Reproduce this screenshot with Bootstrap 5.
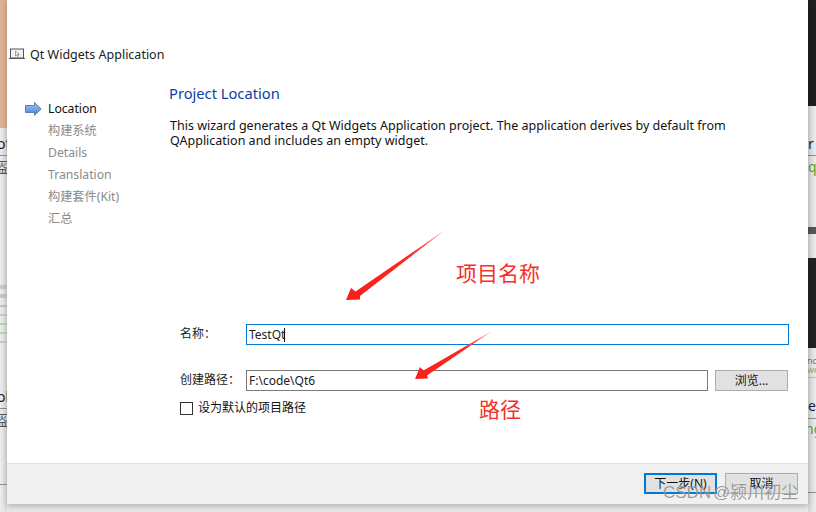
<!DOCTYPE html>
<html lang="zh">
<head>
<meta charset="utf-8">
<title>Qt Widgets Application</title>
<link href="https://cdn.jsdelivr.net/npm/bootstrap@5.3.0/dist/css/bootstrap.min.css" rel="stylesheet">
<style>
html,body{margin:0;height:512px;width:816px;overflow:hidden;background:#e9e9e9}
body{font-family:"Noto Sans","Noto Sans CJK SC",sans-serif;font-size:12px;color:#111;line-height:1.2}
.stage{height:512px;width:816px;position:relative}
.strip-l{width:7px;flex:none;overflow:hidden;background:linear-gradient(90deg,#eeeeee,#dcdcdc)}
.strip-r{width:8px;flex:none;overflow:hidden;background:linear-gradient(90deg,#d8d8d8,#ececec)}
.frag{overflow:hidden;white-space:nowrap;flex:none}
.tan{height:128px;background:#dcb093}
.dark{background:#1f1f1f}
.rule{height:1px;background:#8f8f8f;flex:none}
.fragtxt{font-size:14px;line-height:16px;color:#1a1a3c}
.dlg{width:801px;height:504px;flex:none;background:#fff;box-shadow:0 2px 6px rgba(0,0,0,.25);position:relative}
.titlebar{height:65px;padding-top:47px;padding-left:2px;font-size:12.5px;color:#222}
.titlebar svg{margin:1px 5px 0 0}
.side{width:162px;flex:none;padding-top:33px}
.step{height:22px;line-height:22px;padding-left:41px;color:#8a8a8a;font-size:12.2px;position:relative}
.step.on{color:#111}
.step svg{position:absolute;left:18px;top:4px}
.content{flex:1 1 auto;min-width:0}
.heading{font-size:14.7px;line-height:20px;color:#0a3fa6;margin-top:18px;margin-bottom:15px}
.intro{margin:0 0 0 1px;line-height:15px;font-size:12.5px;width:600px}
.fld{height:21px;border:1px solid #7a7a7a;background:#fff;padding:0 2px;line-height:19px;font-size:12px;color:#222;border-radius:0}
.fld.act{border-color:#0078d7;width:543px;flex:none}
.caret-bar{display:inline-block;width:1px;height:14px;background:#111;vertical-align:-3px;margin-left:-1px}
.lbl{width:77px;padding-left:11px;flex:none;color:#222;white-space:nowrap}
.row-a{margin-top:176px;height:21px}
.row-b{margin-top:25px;height:21px}
.browse{width:73px;height:21px;border:1px solid #adadad;background:#e1e1e1;margin-left:7px;line-height:19px;padding:0;font-size:12px;color:#111;border-radius:0}
.chk{margin:10px 0 0 11px;height:14px}
.box{width:13px;height:13px;border:1px solid #333;background:#fff;flex:none;margin-right:5px}
.foot{height:41px;background:#f0f0f0;border-top:1px solid #dfdfdf;position:absolute;left:0;right:0;bottom:0;padding:9px 10px 0 0}
.fbtn{width:73px;height:21px;border:1px solid #adadad;background:#e1e1e1;padding:0;line-height:19px;font-size:12px;color:#111;border-radius:0;margin-left:8px}
.fbtn.def{border:2px solid #0078d7;line-height:17px}
.notes{position:absolute;left:0;top:0;pointer-events:none}
.red{position:absolute;color:#f5302a;font-size:21px;line-height:26px;white-space:nowrap}
.n1{left:456px;top:260px}
.n2{left:479px;top:396px}
.mark-w{position:absolute;left:663px;top:482px;font-size:17px;line-height:22px;color:rgba(90,90,90,.6);white-space:nowrap;word-spacing:-3px;font-family:"Liberation Sans","Noto Sans CJK SC",sans-serif;text-shadow:0 0 1px rgba(255,255,255,.7)}
</style>
</head>
<body>
<div class="stage d-flex">
  <div class="strip-l d-flex flex-column">
    <div class="frag tan"></div>
    <div class="frag" style="height:8px"></div>
    <div class="frag fragtxt" style="height:16px;margin-left:-3px">ot</div>
    <div class="rule" style="margin-top:3px"></div>
    <div class="frag fragtxt" style="height:18px;margin-left:-6px;margin-top:3px;color:#555">盔</div>
    <div class="frag" style="height:108px"></div>
    <div class="rule" style="height:4px;background:#c8c8c8"></div>
    <div class="frag" style="height:5px"></div>
    <div class="rule" style="height:4px;background:#c8c8c8"></div>
    <div class="frag" style="height:7px"></div>
    <div class="rule" style="height:2px;background:#c4c4c4"></div>
    <div class="frag" style="height:7px"></div>
    <div class="rule" style="height:2px;background:#b4d6b4"></div>
    <div class="frag" style="height:7px"></div>
    <div class="rule" style="height:2px;background:#b4d6b4"></div>
    <div class="frag" style="height:7px"></div>
    <div class="rule" style="height:2px;background:#b4d6b4"></div>
    <div class="frag" style="height:7px"></div>
    <div class="rule" style="height:2px;background:#b4d6b4"></div>
    <div class="frag" style="height:46px"></div>
    <div class="frag fragtxt" style="height:16px;margin-left:-3px">ol</div>
    <div class="rule" style="margin-top:3px"></div>
    <div class="frag fragtxt" style="height:18px;margin-left:-6px;margin-top:3px;color:#555">盔</div>
    <div class="frag" style="height:54px"></div>
    <div class="rule"></div>
  </div>

  <div class="dlg d-flex flex-column">
    <div class="titlebar d-flex align-items-start">
      <svg width="16" height="12" viewBox="0 0 16 12"><rect x="1.5" y="1" width="13" height="9" fill="#f4f4f4" stroke="#555"/><path d="M0 10.5H16" stroke="#555"/><path d="M6.5 3v5l1.3-1.2 1 1.8.8-.4-1-1.8h1.8z" fill="#fff" stroke="#666" stroke-width=".6"/></svg>
      <span>Qt Widgets Application</span>
    </div>
    <div class="d-flex flex-grow-1">
      <div class="side">
        <div class="step on">
          <svg width="17" height="14" viewBox="0 0 17 14"><defs><linearGradient id="ar" x1="0" y1="0" x2="0" y2="1"><stop offset="0" stop-color="#a9c8f2"/><stop offset="1" stop-color="#3d7fd6"/></linearGradient></defs><path d="M.5 3.5H9.5V.7L16.2 7 9.5 13.3V10.5H.5z" fill="url(#ar)" stroke="#5e7fa8"/></svg>
          Location</div>
        <div class="step">构建系统</div>
        <div class="step">Details</div>
        <div class="step">Translation</div>
        <div class="step">构建套件(Kit)</div>
        <div class="step">汇总</div>
      </div>
      <div class="content">
        <div class="heading">Project Location</div>
        <p class="intro">This wizard generates a Qt Widgets Application project. The application derives by default from QApplication and includes an empty widget.</p>
        <div class="d-flex align-items-center row-a">
          <div class="lbl">名称：</div>
          <div class="fld act">TestQt<span class="caret-bar"></span></div>
        </div>
        <div class="d-flex align-items-center row-b">
          <div class="lbl">创建路径：</div>
          <div class="fld" style="width:462px">F:\code\Qt6</div>
          <button type="button" class="btn browse">浏览...</button>
        </div>
        <div class="d-flex align-items-center chk">
          <span class="box"></span><span>设为默认的项目路径</span>
        </div>
      </div>
    </div>
    <div class="foot d-flex justify-content-end">
      <button type="button" class="btn fbtn def">下一步(N)</button>
      <button type="button" class="btn fbtn">取消</button>
    </div>
  </div>

  <div class="strip-r d-flex flex-column">
    <div class="frag dark" style="height:106px"></div>
    <div class="frag" style="height:30px"></div>
    <div class="frag fragtxt" style="height:16px">r</div>
    <div class="rule" style="margin-top:3px"></div>
    <div class="frag fragtxt" style="height:18px;margin-top:3px;color:#5a9e2e">q</div>
    <div class="frag" style="height:50px"></div>
    <div class="frag" style="height:7px;background:#555"></div>
    <div class="frag" style="height:24px"></div>
    <div class="frag dark" style="height:90px;background:#222"></div>
    <div class="frag" style="height:8px"></div>
    <div class="frag" style="height:10px;font-size:9px;line-height:10px;color:#777;margin-left:-1px">nd</div>
    <div class="frag" style="height:8px;font-size:9px;line-height:8px;color:#8bb06a;margin-left:-1px">we</div>
    <div class="rule" style="background:#bbb;margin-top:3px"></div>
    <div class="frag fragtxt" style="height:16px;margin-top:20px">e</div>
    <div class="rule" style="margin-top:4px"></div>
    <div class="frag fragtxt" style="height:18px;margin-top:2px;color:#5a9e2e;margin-left:-3px">ng</div>
    <div class="frag" style="height:53px"></div>
    <div class="rule"></div>
  </div>

  <svg class="notes" width="816" height="512" viewBox="0 0 816 512">
    <defs>
      <linearGradient id="a1" gradientUnits="userSpaceOnUse" x1="346" y1="300" x2="445" y2="230"><stop offset="0" stop-color="#fa1f18"/><stop offset=".65" stop-color="#fb2a22"/><stop offset="1" stop-color="#ff8f86"/></linearGradient>
      <linearGradient id="a2" gradientUnits="userSpaceOnUse" x1="415" y1="379" x2="492" y2="331"><stop offset="0" stop-color="#fa1f18"/><stop offset=".65" stop-color="#fb2a22"/><stop offset="1" stop-color="#ff8f86"/></linearGradient>
    </defs>
    <polygon points="346,300 351,288 355.5,291.5 445,230 360,296 360,299.5" fill="url(#a1)"/>
    <polygon points="415,379 420,367 423.5,370.5 492,331 427,375.5 428,378.5" fill="url(#a2)"/>
  </svg>
  <div class="red n1">项目名称</div>
  <div class="red n2">路径</div>
  <div class="mark-w">CSDN @颍川初尘</div>
</div>
</body>
</html>
